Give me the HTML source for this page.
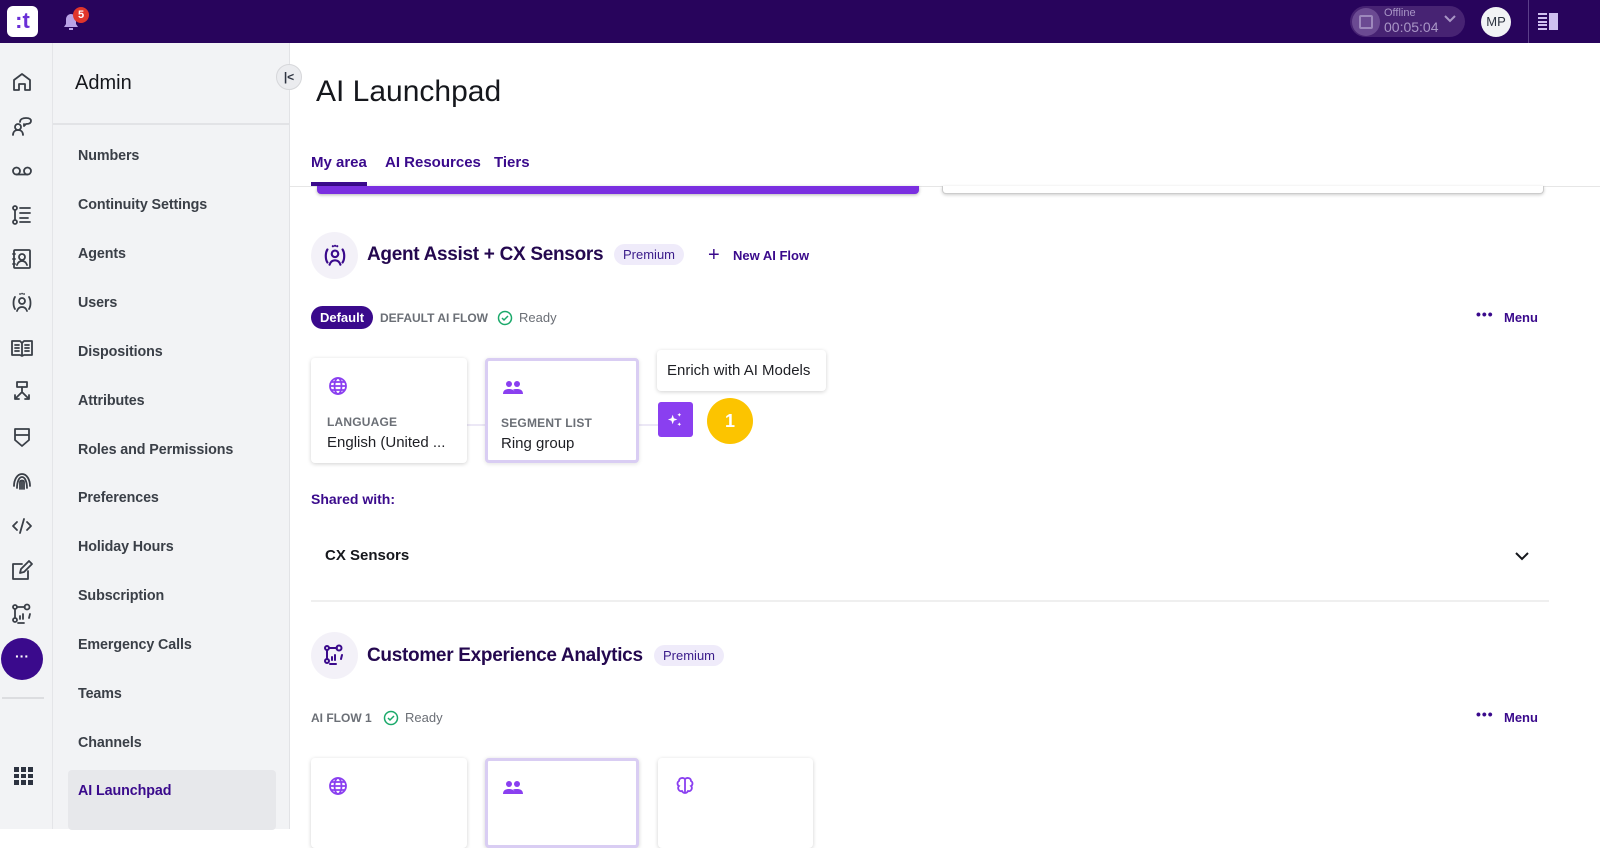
<!DOCTYPE html>
<html><head><meta charset="utf-8"><style>
*{box-sizing:border-box;margin:0;padding:0}
body{width:1600px;height:829px;overflow:hidden;font-family:"Liberation Sans",Arial,sans-serif;background:#fff;position:relative}
.a{position:absolute}
.top{left:0;top:0;width:1600px;height:43px;background:#28045c}
.rail{left:0;top:43px;width:53px;height:786px;background:#f2f3f5;border-right:1px solid #e4e5e8}
.side{left:53px;top:43px;width:237px;height:786px;background:#f2f3f5;border-right:1px solid #e2e3e6}
.si{position:absolute;left:25px;font-size:14.3px;color:#3a3f47;font-weight:bold;letter-spacing:-.1px}
.ic{position:absolute;left:10px;width:24px;height:24px}
.ic svg{width:24px;height:24px;fill:none;stroke:#3a3f47;stroke-width:1.8;stroke-linecap:round;stroke-linejoin:round}
.card{position:absolute;background:#fff;border-radius:4px;box-shadow:0 1px 4px rgba(0,0,0,.18)}
.lbl{position:absolute;left:16px;font-size:12px;color:#6b6f76;font-weight:bold;letter-spacing:.2px}
.val{position:absolute;left:16px;font-size:15px;color:#1e1f24}
.pv{position:absolute;background:#efebfa;color:#3a1b8a;font-size:13px;border-radius:12px;padding:3px 9px}
.dark{color:#24084f}
</style></head><body>
<div class="a top"></div>
<div class="a" style="left:7px;top:6px;width:31px;height:31px;background:#fff;border-radius:6px;color:#6a2fd6;font-weight:bold;font-size:22px;text-align:center;line-height:30px">:t</div>
<svg class="a" style="left:62px;top:12px" width="18" height="20" viewBox="0 0 18 20"><path d="M9 2c-3 0-5 2.5-5 5.5V12l-2 3h14l-2-3V7.5C14 4.5 12 2 9 2z" fill="#b9a2e6"/><rect x="7" y="16" width="4" height="2" fill="#b9a2e6"/></svg>
<div class="a" style="left:73px;top:7px;width:16px;height:16px;border-radius:8px;background:#e0352b;color:#fff;font-size:11px;font-weight:bold;text-align:center;line-height:16px">5</div>
<div class="a" style="left:1350px;top:6px;width:115px;height:31px;border-radius:16px;background:#472373"></div>
<div class="a" style="left:1352px;top:8px;width:28px;height:28px;border-radius:14px;background:#6b4a92"></div>
<div class="a" style="left:1359px;top:15px;width:14px;height:14px;border:2px solid #9d88bc;border-radius:2px"></div>
<div class="a" style="left:1384px;top:7px;font-size:11px;color:#a996c6">Offline</div>
<div class="a" style="left:1384px;top:19px;font-size:14px;color:#a996c6">00:05:04</div>
<svg class="a" style="left:1443px;top:14px" width="14" height="10"><path d="M2 2l5 5 5-5" stroke="#a996c6" stroke-width="2" fill="none"/></svg>
<div class="a" style="left:1481px;top:7px;width:30px;height:30px;border-radius:15px;background:#f2f3f5;color:#2d3340;font-size:13px;text-align:center;line-height:30px">MP</div>
<div class="a" style="left:1528px;top:0;width:1px;height:43px;background:#5c3f8a"></div>
<div class="a" style="left:1538px;top:13px;width:9px;height:17px;display:flex;flex-direction:column;justify-content:space-between"><i style="height:2px;background:#cfc0ef"></i><i style="height:2px;background:#cfc0ef"></i><i style="height:2px;background:#cfc0ef"></i><i style="height:2px;background:#cfc0ef"></i><i style="height:2px;background:#cfc0ef"></i></div>
<div class="a" style="left:1549px;top:13px;width:9px;height:17px;background:#cfc0ef"></div>

<div class="a rail">
<div class="ic" style="top:27px"><svg viewBox="0 0 24 24"><path d="M4 20V10l8-6 8 6v10h-5v-6H9v6z"/></svg></div>
<div class="ic" style="top:71px"><svg viewBox="0 0 24 24"><circle cx="8" cy="13" r="3"/><path d="M3 21c0-3 2-5 5-5s5 2 5 5M10 8c0-3 3-4 6-4s5 1 5 3-2 3-5 3l-2 2v-2"/></svg></div>
<div class="ic" style="top:116px"><svg viewBox="0 0 24 24"><circle cx="6.5" cy="12" r="3.5"/><circle cx="17.5" cy="12" r="3.5"/><path d="M6.5 15.5h11"/></svg></div>
<div class="ic" style="top:160px"><svg viewBox="0 0 24 24"><circle cx="5" cy="5" r="2"/><circle cx="5" cy="19" r="2"/><path d="M5 7v10M10 5h10M10 10h10M10 15h8M10 19h10"/></svg></div>
<div class="ic" style="top:204px"><svg viewBox="0 0 24 24"><rect x="4" y="3" width="16" height="18" rx="1"/><circle cx="12" cy="10" r="3"/><path d="M7 18c1-3 3-4 5-4s4 1 5 4M3 7h2M3 12h2M3 17h2"/></svg></div>
<div class="ic" style="top:248px"><svg viewBox="0 0 24 24"><circle cx="12" cy="10" r="3"/><path d="M7 20c1-3 3-4 5-4s4 1 5 4M5 6C3 9 3 15 5 18M19 6c2 3 2 9 0 12M10 3h.1M12 2.6h.1M14 3h.1"/></svg></div>
<div class="ic" style="top:293px"><svg viewBox="0 0 24 24"><path d="M2 5h8l2 2 2-2h8v14h-8l-2 1-2-1H2zM12 7v13M5 9h4M5 12h4M5 15h4M15 9h4M15 12h4M15 15h4"/></svg></div>
<div class="ic" style="top:337px"><svg viewBox="0 0 24 24"><rect x="7" y="2" width="10" height="5"/><path d="M12 7v5l-7 7M12 12l7 7M5 15v4h4M19 15v4h-4"/></svg></div>
<div class="ic" style="top:382px"><svg viewBox="0 0 24 24"><path d="M5 4h14v11l-7 6-7-6zM5 10h14"/></svg></div>
<div class="ic" style="top:426px"><svg viewBox="0 0 24 24"><path d="M4 17c0-6 3-12 8-12s8 6 8 12M7 19c0-6 2-11 5-11s5 5 5 11M10 20v-7c0-2 4-2 4 0v7M12 13v7"/></svg></div>
<div class="ic" style="top:471px"><svg viewBox="0 0 24 24"><path d="M7 8l-4 4 4 4M17 8l4 4-4 4M14 5l-4 14"/></svg></div>
<div class="ic" style="top:516px"><svg viewBox="0 0 24 24"><path d="M12 5H3v15h15v-8M10 14l1-4 8-8 3 3-8 8z"/></svg></div>
<div class="ic" style="top:559px"><svg viewBox="0 0 24 24"><circle cx="5" cy="5" r="2"/><circle cx="17" cy="5" r="2.5"/><circle cx="5" cy="18" r="2"/><path d="M5 7v9M7 5h8M10 14v3M13 12v5M20 12l-1 4M8 21h6"/></svg></div>
</div>
<div class="a" style="left:1px;top:638px;width:42px;height:42px;border-radius:21px;background:#3a0a8c;color:#fff;text-align:center;line-height:36px;font-size:14px;font-weight:bold">···</div>
<div class="a" style="left:2px;top:697px;width:42px;height:2px;background:#dcdde0"></div>
<div class="a" style="left:14px;top:767px;width:19px;height:18px;display:grid;grid-template-columns:repeat(3,5px);gap:2px"><i style="background:#2d3340"></i><i style="background:#2d3340"></i><i style="background:#2d3340"></i><i style="background:#2d3340"></i><i style="background:#2d3340"></i><i style="background:#2d3340"></i><i style="background:#2d3340"></i><i style="background:#2d3340"></i><i style="background:#2d3340"></i></div>

<div class="a side">
<div class="a" style="left:22px;top:29px;font-size:20px;color:#15171c">Admin</div>
<div class="a" style="left:0;top:80px;width:236px;height:2px;background:#e2e3e6"></div>
<div class="si" style="top:105px">Numbers</div>
<div class="si" style="top:154px">Continuity Settings</div>
<div class="si" style="top:203px">Agents</div>
<div class="si" style="top:252px">Users</div>
<div class="si" style="top:301px">Dispositions</div>
<div class="si" style="top:350px">Attributes</div>
<div class="si" style="top:399px">Roles and Permissions</div>
<div class="si" style="top:447px">Preferences</div>
<div class="si" style="top:496px">Holiday Hours</div>
<div class="si" style="top:545px">Subscription</div>
<div class="si" style="top:594px">Emergency Calls</div>
<div class="si" style="top:643px">Teams</div>
<div class="si" style="top:692px">Channels</div>
<div class="a" style="left:15px;top:727px;width:208px;height:60px;background:#e7e8eb;border-radius:4px"></div>
<div class="si" style="top:740px;color:#3a0a8c">AI Launchpad</div>
</div>
<div class="a" style="left:276px;top:64px;width:26px;height:26px;border-radius:13px;background:#ebecef;border:1px solid #d6d7da;font-size:12px;color:#2d3340;text-align:center;line-height:24px;font-weight:bold">|&lt;</div>

<!-- main header -->
<div class="a" style="left:316px;top:75px;font-size:30px;color:#15171c">AI Launchpad</div>
<div class="a" style="left:311px;top:154px;font-size:15px;font-weight:bold;color:#3a0a8c">My area</div>
<div class="a" style="left:385px;top:154px;font-size:15px;font-weight:bold;color:#3a0a8c">AI Resources</div>
<div class="a" style="left:494px;top:154px;font-size:15px;font-weight:bold;color:#3a0a8c">Tiers</div>
<div class="a" style="left:311px;top:182px;width:56px;height:4px;background:#3a0a8c"></div>
<div class="a" style="left:290px;top:186px;width:1310px;height:1px;background:#e6e6e6"></div>
<div class="a" style="left:317px;top:186px;width:602px;height:8px;background:#7a2fe0;border-radius:0 0 4px 4px;box-shadow:0 1px 3px rgba(0,0,0,.3)"></div>
<div class="a" style="left:942px;top:186px;width:602px;height:8px;background:#fff;border:1px solid #ccc;border-top:none;border-radius:0 0 4px 4px;box-shadow:0 1px 3px rgba(0,0,0,.2)"></div>

<!-- section 1 -->
<div class="a" style="left:311px;top:232px;width:47px;height:47px;border-radius:24px;background:#f3f1f8"></div>
<svg class="a" style="left:322px;top:243px" width="26" height="26" viewBox="0 0 24 24" fill="none" stroke="#3a0a8c" stroke-width="2" stroke-linecap="round"><circle cx="12" cy="10" r="3"/><path d="M7 20c1-3 3-4 5-4s4 1 5 4M5 6C3 9 3 15 5 18M19 6c2 3 2 9 0 12M10 3h.1M12 2.6h.1M14 3h.1"/></svg>
<div class="a dark" style="left:367px;top:244px;font-size:19px;font-weight:bold;letter-spacing:-.3px">Agent Assist + CX Sensors</div>
<div class="pv" style="left:614px;top:244px">Premium</div>
<div class="a" style="left:708px;top:244px;font-size:20px;color:#3a0a8c">+</div>
<div class="a" style="left:733px;top:248px;font-size:13px;font-weight:bold;color:#3a0a8c">New AI Flow</div>

<div class="a" style="left:311px;top:306px;width:62px;height:23px;border-radius:12px;background:#3a0a8c;color:#fff;font-size:13px;font-weight:bold;text-align:center;line-height:23px">Default</div>
<div class="a" style="left:380px;top:311px;font-size:12px;font-weight:bold;color:#6b6f76">DEFAULT AI FLOW</div>
<svg class="a" style="left:497px;top:310px" width="16" height="16" viewBox="0 0 16 16" fill="none" stroke="#1aa96a" stroke-width="1.5"><circle cx="8" cy="8" r="6.5"/><path d="M5 8l2 2 4-4"/></svg>
<div class="a" style="left:519px;top:310px;font-size:13px;color:#6b6f76">Ready</div>
<div class="a" style="left:1476px;top:306px;font-size:14px;font-weight:bold;color:#3a0a8c;letter-spacing:1px">•••</div>
<div class="a" style="left:1504px;top:310px;font-size:13px;font-weight:bold;color:#3a0a8c">Menu</div>

<div class="a" style="left:466px;top:424px;width:192px;height:2px;background:#ece8f6"></div>
<div class="card" style="left:311px;top:358px;width:156px;height:105px">
<svg class="a" style="left:17px;top:18px" width="20" height="20" viewBox="0 0 20 20" fill="none" stroke="#8a3ff0" stroke-width="1.8"><circle cx="10" cy="10" r="8"/><ellipse cx="10" cy="10" rx="3.5" ry="8"/><path d="M2 10h16M3.5 6h13M3.5 14h13"/></svg>
<div class="lbl" style="top:57px">LANGUAGE</div>
<div class="val" style="top:76px">English (United ...</div>
</div>
<div class="card" style="left:485px;top:358px;width:154px;height:105px;border:3px solid #d9cdf3;box-shadow:0 1px 4px rgba(0,0,0,.12)">
<svg class="a" style="left:14px;top:19px" width="22" height="16" viewBox="0 0 22 16" fill="#8a3ff0"><circle cx="7" cy="4" r="3"/><circle cx="15" cy="4" r="3"/><path d="M1 14c0-4 3-5 6-5s6 1 6 5zM13 14c0-2-1-4-2-4.5 1-.5 2-.5 4-.5 3 0 6 1 6 5z"/></svg>
<div class="lbl" style="top:55px;left:13px">SEGMENT LIST</div>
<div class="val" style="top:74px;left:13px">Ring group</div>
</div>
<div class="card" style="left:657px;top:350px;width:169px;height:41px;font-size:15px;color:#1e1f24;line-height:41px;padding-left:10px">Enrich with AI Models</div>
<div class="a" style="left:658px;top:402px;width:35px;height:35px;background:#8a3ff0;border-radius:3px"></div>
<svg class="a" style="left:666px;top:410px" width="19" height="19" viewBox="0 0 20 20" fill="#fff"><path d="M7 5l1.3 3.7L12 10l-3.7 1.3L7 15l-1.3-3.7L2 10l3.7-1.3zM14 3l.6 1.4 1.4.6-1.4.6L14 7l-.6-1.4L12 5l1.4-.6zM14 13l.6 1.4 1.4.6-1.4.6L14 17l-.6-1.4L12 15l1.4-.6z"/></svg>
<div class="a" style="left:707px;top:398px;width:46px;height:46px;border-radius:23px;background:#fcc400;color:#fff;font-size:18px;font-weight:bold;text-align:center;line-height:46px">1</div>

<div class="a" style="left:311px;top:491px;font-size:14px;font-weight:bold;color:#3a0a8c">Shared with:</div>
<div class="a" style="left:325px;top:547px;font-size:15px;font-weight:bold;color:#15171c">CX Sensors</div>
<svg class="a" style="left:1514px;top:550px" width="16" height="12"><path d="M2 3l6 6 6-6" stroke="#15171c" stroke-width="2" fill="none"/></svg>
<div class="a" style="left:311px;top:600px;width:1238px;height:2px;background:#efefef"></div>

<!-- section 2 -->
<div class="a" style="left:311px;top:632px;width:47px;height:47px;border-radius:24px;background:#f3f1f8"></div>
<svg class="a" style="left:322px;top:643px" width="24" height="24" viewBox="0 0 24 24" fill="none" stroke="#3a0a8c" stroke-width="2" stroke-linecap="round"><circle cx="5" cy="5" r="2"/><circle cx="17" cy="5" r="2.5"/><circle cx="5" cy="18" r="2"/><path d="M5 7v9M7 5h8M10 14v3M13 12v5M20 12l-1 4M8 21h6"/></svg>
<div class="a dark" style="left:367px;top:645px;font-size:19px;font-weight:bold;letter-spacing:-.3px">Customer Experience Analytics</div>
<div class="pv" style="left:654px;top:645px">Premium</div>
<div class="a" style="left:311px;top:711px;font-size:12px;font-weight:bold;color:#6b6f76">AI FLOW 1</div>
<svg class="a" style="left:383px;top:710px" width="16" height="16" viewBox="0 0 16 16" fill="none" stroke="#1aa96a" stroke-width="1.5"><circle cx="8" cy="8" r="6.5"/><path d="M5 8l2 2 4-4"/></svg>
<div class="a" style="left:405px;top:710px;font-size:13px;color:#6b6f76">Ready</div>
<div class="a" style="left:1476px;top:706px;font-size:14px;font-weight:bold;color:#3a0a8c;letter-spacing:1px">•••</div>
<div class="a" style="left:1504px;top:710px;font-size:13px;font-weight:bold;color:#3a0a8c">Menu</div>

<div class="card" style="left:311px;top:758px;width:156px;height:90px">
<svg class="a" style="left:17px;top:18px" width="20" height="20" viewBox="0 0 20 20" fill="none" stroke="#8a3ff0" stroke-width="1.8"><circle cx="10" cy="10" r="8"/><ellipse cx="10" cy="10" rx="3.5" ry="8"/><path d="M2 10h16M3.5 6h13M3.5 14h13"/></svg>
</div>
<div class="card" style="left:485px;top:758px;width:154px;height:90px;border:3px solid #d9cdf3">
<svg class="a" style="left:14px;top:19px" width="22" height="16" viewBox="0 0 22 16" fill="#8a3ff0"><circle cx="7" cy="4" r="3"/><circle cx="15" cy="4" r="3"/><path d="M1 14c0-4 3-5 6-5s6 1 6 5zM13 14c0-2-1-4-2-4.5 1-.5 2-.5 4-.5 3 0 6 1 6 5z"/></svg>
</div>
<div class="card" style="left:658px;top:758px;width:155px;height:90px">
<svg class="a" style="left:17px;top:18px" width="20" height="20" viewBox="0 0 20 20" fill="none" stroke="#8a3ff0" stroke-width="1.8"><path d="M10 3v14M10 3c-2-2-6-1-6 2-2 1-2 4 0 5-2 2 0 6 3 5 1 2 3 2 3 2M10 3c2-2 6-1 6 2 2 1 2 4 0 5 2 2 0 6-3 5-1 2-3 2-3 2"/></svg>
</div>
</body></html>
